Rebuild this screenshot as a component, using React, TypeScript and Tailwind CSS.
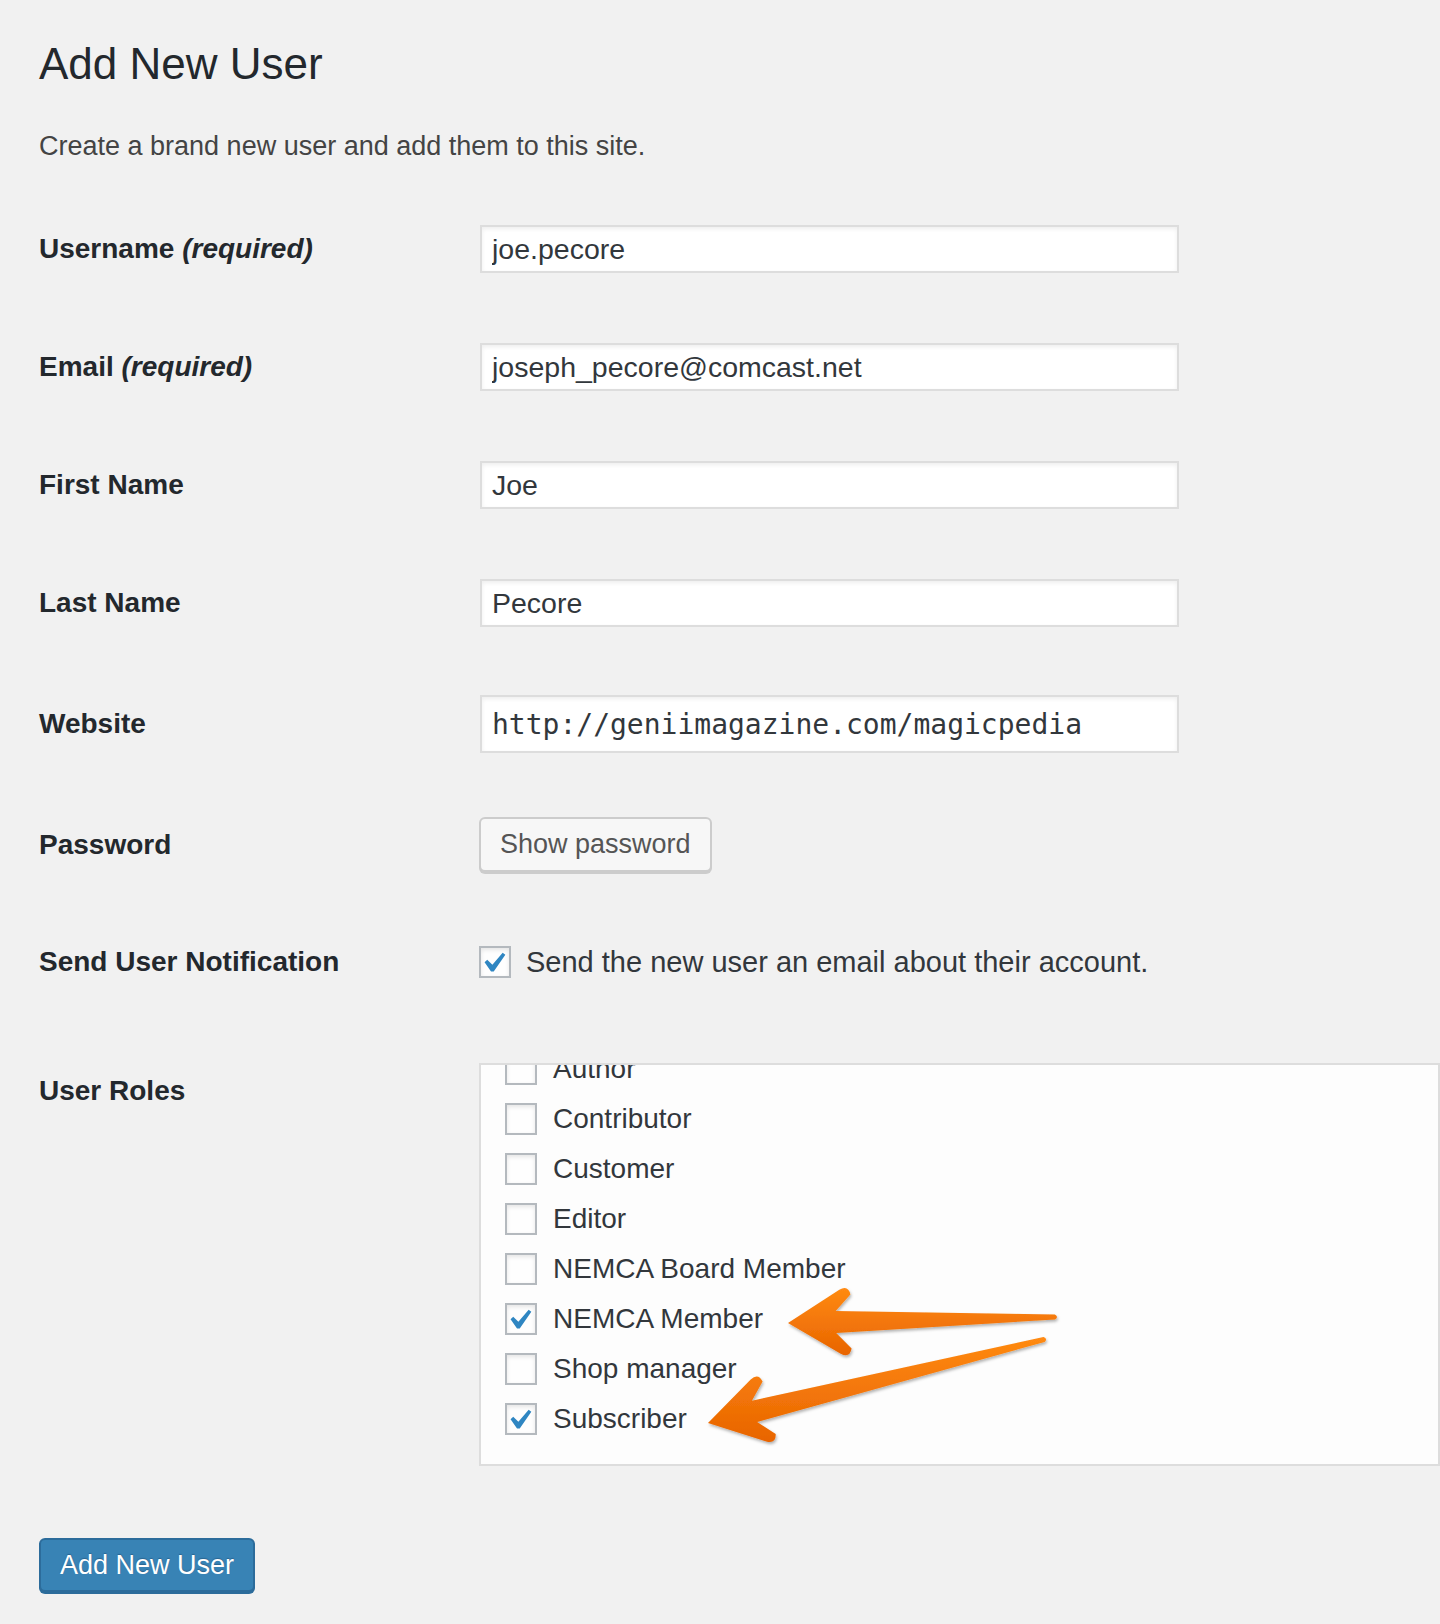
import React from "react";

const roles: [string, boolean][] = [
  ["Author", false],
  ["Contributor", false],
  ["Customer", false],
  ["Editor", false],
  ["NEMCA Board Member", false],
  ["NEMCA Member", true],
  ["Shop manager", false],
  ["Subscriber", true],
];

function Checkbox({ checked }: { checked: boolean }) {
  return (
    <span className="w-8 h-8 shrink-0 border-2 border-[#b4b9be] bg-[#fefefe] shadow-[inset_0_2px_4px_rgba(0,0,0,0.1)] flex items-center justify-center">
      {checked && (
        <svg viewBox="5 4 12 11" className="w-[24px] h-[22px]">
          <path d="M14.83 4.89l1.34.94-5.81 8.38H9.02L5.78 9.67l1.34-1.25 2.57 2.4z" fill="#2f86c2" />
        </svg>
      )}
    </span>
  );
}

// skitch style arrow, drawn from tail to tip
function arrowPath(tail: [number, number], tip: [number, number]) {
  const dx = tail[0] - tip[0];
  const dy = tail[1] - tip[1];
  const len = Math.hypot(dx, dy);
  const bx = dx / len;
  const by = dy / len;
  const nx = -by;
  const ny = bx;
  const p = (a: number, q: number) =>
    `${(tip[0] + bx * a + nx * q).toFixed(1)},${(tip[1] + by * a + ny * q).toFixed(1)}`;
  return [
    `M${p(0, 0)}`,
    `L${p(52, -32)}`,
    `Q${p(61, -37)} ${p(63, -27)}`,
    `L${p(48, -11)}`,
    `L${p(len - 2, -2.5)}`,
    `Q${p(len + 2, 0)} ${p(len - 2, 2.5)}`,
    `L${p(48, 11)}`,
    `L${p(63, 27)}`,
    `Q${p(61, 37)} ${p(52, 32)}`,
    "Z",
  ].join(" ");
}

function Row({ label, children }: { label: React.ReactNode; children: React.ReactNode }) {
  return (
    <div className="flex items-center">
      <div className="w-[440px] shrink-0 text-[28px] leading-[36px] font-bold text-[#23282d]">{label}</div>
      {children}
    </div>
  );
}

const inputCls =
  "ml-px w-[699px] h-[48px] border-2 border-[#dddddd] bg-white shadow-[inset_0_2px_4px_rgba(0,0,0,0.07)] px-[10px] text-[28.5px] text-[#32373c] outline-none";

export default function App() {
  return (
    <div className="relative w-[1440px] h-[1624px] overflow-hidden bg-[#f1f1f1] font-['Liberation_Sans',Arial,sans-serif] text-[#23282d]">
      <div className="pl-[39px] pt-[36px]">
        <h1 className="text-[44px] leading-[56px] font-normal">Add New User</h1>
        <p className="mt-[36px] text-[27px] leading-[36px] text-[#444444]">
          Create a brand new user and add them to this site.
        </p>

        <div className="mt-[61px] flex flex-col">
          <Row
            label={
              <>
                Username <i>(required)</i>
              </>
            }
          >
            <input className={inputCls} defaultValue="joe.pecore" readOnly />
          </Row>
          <div className="mt-[70px]">
            <Row
              label={
                <>
                  Email <i>(required)</i>
                </>
              }
            >
              <input className={inputCls} defaultValue="joseph_pecore@comcast.net" readOnly />
            </Row>
          </div>
          <div className="mt-[70px]">
            <Row label="First Name">
              <input className={inputCls} defaultValue="Joe" readOnly />
            </Row>
          </div>
          <div className="mt-[70px]">
            <Row label="Last Name">
              <input className={inputCls} defaultValue="Pecore" readOnly />
            </Row>
          </div>
          <div className="mt-[68px]">
            <Row label="Website">
              <input
                className="ml-px w-[699px] h-[58px] border-2 border-[#dddddd] bg-white shadow-[inset_0_2px_4px_rgba(0,0,0,0.07)] px-[10px] text-[28px] text-[#32373c] outline-none font-['DejaVu_Sans_Mono',monospace]"
                defaultValue="http://geniimagazine.com/magicpedia"
                readOnly
              />
            </Row>
          </div>
          <div className="mt-[64px]">
            <Row label="Password">
              <button className="h-[55px] px-[19px] border-2 border-[#cccccc] bg-[#f7f7f7] rounded-[6px] shadow-[0_2px_0_#cccccc] text-[27px] text-[#555555]">
                Show password
              </button>
            </Row>
          </div>
          <div className="mt-[72px]">
            <Row label="Send User Notification">
              <label className="flex items-center gap-[15px] text-[29px] leading-[36px] text-[#32373c]">
                <Checkbox checked />
                Send the new user an email about their account.
              </label>
            </Row>
          </div>
          <div className="mt-[83px] flex items-start">
            <div className="w-[440px] shrink-0 pt-[10px] text-[28px] leading-[36px] font-bold">User Roles</div>
            <div className="w-[1000px] h-[403px] overflow-hidden border-2 border-[#dddddd] bg-[#fdfdfd]">
              <div className="-mt-[21px] pl-[24px] flex flex-col">
                {roles.map(([name, checked]) => (
                  <div key={name} className="h-[50px] flex items-center gap-[16px] text-[28px] text-[#32373c]">
                    <Checkbox checked={checked} />
                    {name}
                  </div>
                ))}
              </div>
            </div>
          </div>
          <div className="mt-[72px]">
            <button className="h-[54px] px-[19px] rounded-[6px] border-2 border-[#2c6c9b] bg-[#3883b5] shadow-[0_2px_0_#2c6c9b] text-[27px] text-white [text-shadow:0_-1px_1px_#2a6591]">
              Add New User
            </button>
          </div>
        </div>
      </div>

      <svg className="absolute inset-0 pointer-events-none" width="1440" height="1624" viewBox="0 0 1440 1624">
        <defs>
          <linearGradient id="og" x1="0" y1="0" x2="0" y2="1">
            <stop offset="0" stopColor="#ff8a12" />
            <stop offset="1" stopColor="#e86400" />
          </linearGradient>
          <filter id="sh" x="-10%" y="-30%" width="120%" height="160%">
            <feDropShadow dx="1" dy="2" stdDeviation="1.5" floodColor="#000" floodOpacity="0.3" />
          </filter>
        </defs>
        <path d={arrowPath([1057, 1317], [788, 1323])} fill="url(#og)" filter="url(#sh)" />
        <path d={arrowPath([1046, 1339], [708, 1423])} fill="url(#og)" filter="url(#sh)" />
      </svg>
    </div>
  );
}
